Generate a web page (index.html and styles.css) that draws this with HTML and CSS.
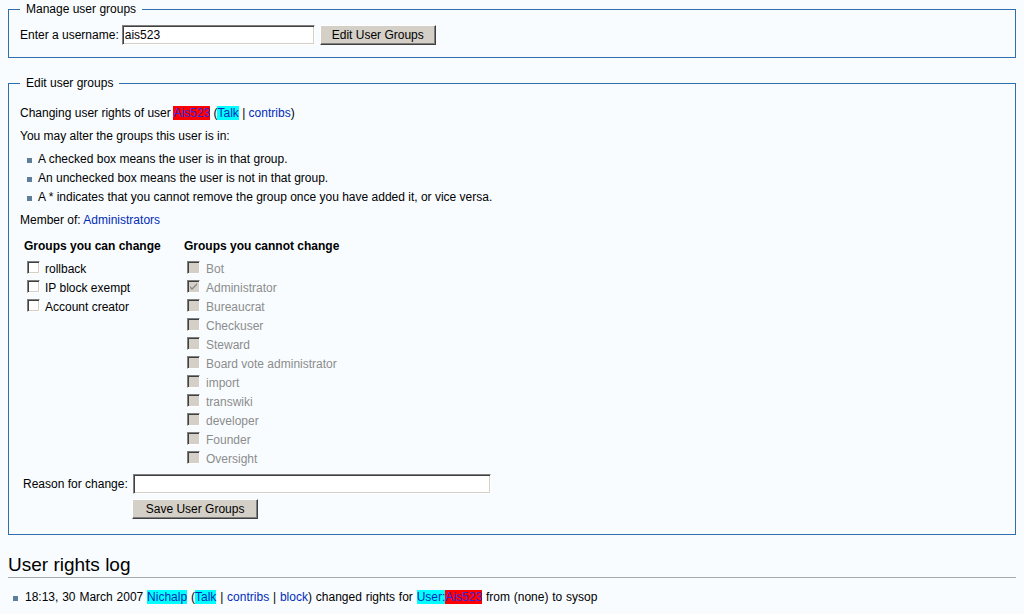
FILE: index.html
```html
<!doctype html>
<html>
<head>
    <title>User rights management</title>
    <meta http-equiv="Content-Type" content="text/html; charset=utf-8" />
    <link rel="stylesheet" href="styles.css">
</head>
<body>
<fieldset class="box box-manage">
    <legend>Manage user groups</legend>
    <div class="lookup">
        <label for="username">Enter a username:</label>
        <input id="username" class="text text-user" type="text" value="ais523">
        <button class="btn">Edit User Groups</button>
    </div>
</fieldset>

<fieldset class="box box-edit">
    <legend>Edit user groups</legend>
    <p>Changing user rights of user <a class="hl-red" href="#">Ais523</a> (<a class="hl-cyan" href="#">Talk</a> | <a href="#">contribs</a>)</p>
    <p>You may alter the groups this user is in:</p>
    <ul class="bullets">
        <li>A checked box means the user is in that group.</li>
        <li>An unchecked box means the user is not in that group.</li>
        <li>A * indicates that you cannot remove the group once you have added it, or vice versa.</li>
    </ul>
    <p>Member of: <a href="#">Administrators</a></p>

    <div class="groups">
        <div class="col col-can">
            <h4>Groups you can change</h4>
            <label class="grp"><span class="cb"></span>rollback</label>
            <label class="grp"><span class="cb"></span>IP block exempt</label>
            <label class="grp"><span class="cb"></span>Account creator</label>
        </div>
        <div class="col col-cannot">
            <h4>Groups you cannot change</h4>
            <label class="grp off"><span class="cb"></span>Bot</label>
            <label class="grp off"><span class="cb"><svg width="9" height="9" viewBox="0 0 9 9"><path d="M1 4 L3 6 L8 1 L8 3 L3 8 L1 6 Z" fill="#8a8a8a"/></svg></span>Administrator</label>
            <label class="grp off"><span class="cb"></span>Bureaucrat</label>
            <label class="grp off"><span class="cb"></span>Checkuser</label>
            <label class="grp off"><span class="cb"></span>Steward</label>
            <label class="grp off"><span class="cb"></span>Board vote administrator</label>
            <label class="grp off"><span class="cb"></span>import</label>
            <label class="grp off"><span class="cb"></span>transwiki</label>
            <label class="grp off"><span class="cb"></span>developer</label>
            <label class="grp off"><span class="cb"></span>Founder</label>
            <label class="grp off"><span class="cb"></span>Oversight</label>
        </div>
    </div>

    <div class="reason">
        <label for="reason">Reason for change:</label>
        <div class="reason-fields">
            <input id="reason" class="text text-reason" type="text">
            <button class="btn">Save User Groups</button>
        </div>
    </div>
</fieldset>

<h2>User rights log</h2>
<ul class="bullets log">
    <li>18:13, 30 March 2007 <a class="hl-cyan" href="#">Nichalp</a> (<a class="hl-cyan" href="#">Talk</a> | <a href="#">contribs</a> | <a href="#">block</a>) changed rights for <a href="#"><span class="hl-cyan">User:</span><span class="hl-red">Ais523</span></a> from (none) to sysop</li>
</ul>
</body>
</html>
```

FILE: styles.css
```css
body        { margin:0 8px; background-color:#f8fcff; color:#000; font-family:"Liberation Sans", Arial, sans-serif; font-size:12px; line-height:19px; }
a           { color:#002bb8; text-decoration:none; }
.hl-red     { background-color:#ff0000; color:#2a2ae0; }
.hl-cyan    { background-color:#00ffff; }

.box        { margin:0; padding:6px 11px 12px; border:1px solid #2f6fab; min-width:0; }
.box legend { padding:0 6px; line-height:19px; }
.box-edit   { margin-top:16px; padding-top:5px; padding-bottom:15px; }

.lookup     { display:flex; align-items:center; gap:5px; }
.lookup label { margin-right:-2px; }

.text       { box-sizing:border-box; height:20px; padding:1px 2px; font:inherit; font-size:12px; background:#fff;
              border:1px solid; border-color:#808080 #fff #fff #808080; box-shadow:inset 1px 1px #404040, inset -1px -1px #d4d0c8; outline:none; }
.text-user  { width:193px; }
.text-reason { width:358px; }

.btn        { box-sizing:border-box; height:20px; padding:0 11px; background:#d4d0c8; color:#000; font:inherit; font-size:12px; line-height:16px;
              border:1px solid; border-color:#fff #404040 #404040 #fff; box-shadow:inset -1px -1px #808080; }
.reason-fields .btn { padding:0 13px; }

p           { margin:4px 0; }
.box-edit > p:first-of-type { margin-top:6px; }

.bullets    { list-style:none; margin:4px 0; padding:0 0 0 7px; }
.bullets li { position:relative; padding-left:11px; }
.bullets li::before { content:""; position:absolute; left:0; top:8px; width:5px; height:5px; background:#5f7e9c; }

.groups     { display:flex; margin-top:7px; padding-left:4px; }
.col        { display:flex; flex-direction:column; }
.col-can    { width:159px; }
.col-cannot { padding-left:1px; }
.col h4     { margin:0 0 4px; font-size:12px; line-height:19px; }
.grp        { display:flex; align-items:center; height:19px; }
.grp .cb    { box-sizing:border-box; width:13px; height:13px; margin:0 5px 0 3px; background:#fff; display:flex; align-items:center; justify-content:center;
              border:1px solid; border-color:#808080 #fff #fff #808080; box-shadow:inset 1px 1px #404040, inset -1px -1px #d4d0c8; position:relative; top:-2px; }
.grp.off    { color:#8c8c8c; }
.grp.off .cb { background:#d4d0c8; margin-right:6px; }

.reason     { display:flex; margin-top:5px; padding-left:3px; gap:5px; }
.reason label { line-height:20px; }
.reason-fields { display:flex; flex-direction:column; align-items:flex-start; gap:5px; }
.reason-fields .btn { margin-left:-1px; }

h2          { margin:18px 0 0; padding-bottom:1px; font-size:19px; font-weight:normal; line-height:23px; border-bottom:1px solid #aaa; }
.log        { margin-top:10px; padding-left:5px; word-spacing:0.5px; }
.log li     { padding-left:12px; }
```
